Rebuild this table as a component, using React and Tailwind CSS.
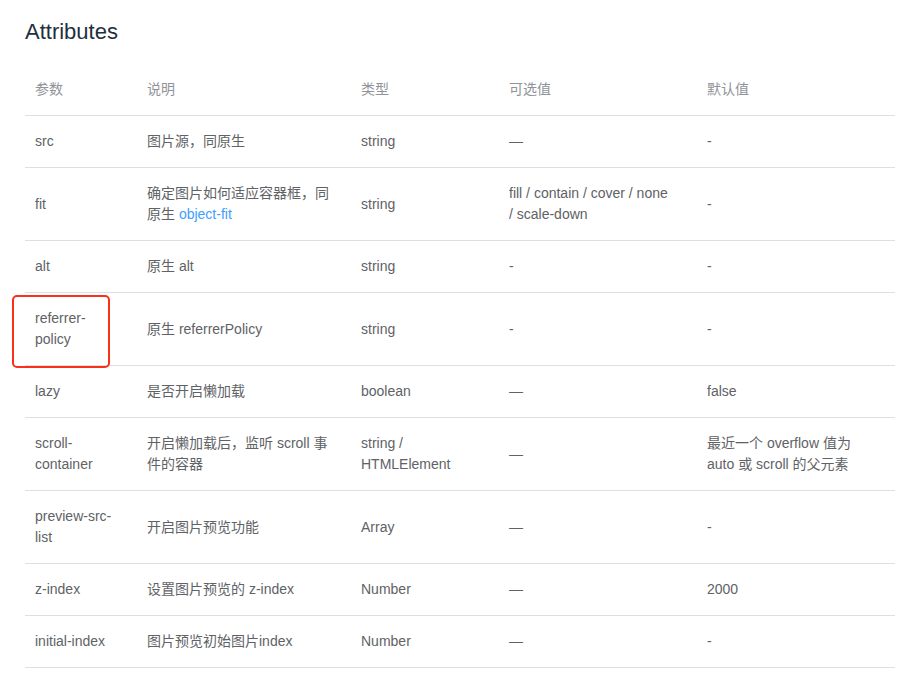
import React from 'react';

const COLS = ['参数', '说明', '类型', '可选值', '默认值'];

const ROWS = [
  { name: 'src', desc: '图片源，同原生', type: 'string', options: '—', def: '-' },
  {
    name: 'fit',
    desc: (
      <>
        确定图片如何适应容器框，同<br />原生 <a className="text-[#409eff]">object-fit</a>
      </>
    ),
    type: 'string',
    options: (
      <>
        fill / contain / cover / none<br />/ scale-down
      </>
    ),
    def: '-',
  },
  { name: 'alt', desc: '原生 alt', type: 'string', options: '-', def: '-' },
  {
    name: (
      <>
        referrer-<br />policy
      </>
    ),
    desc: '原生 referrerPolicy',
    type: 'string',
    options: '-',
    def: '-',
    marked: true,
  },
  { name: 'lazy', desc: '是否开启懒加载', type: 'boolean', options: '—', def: 'false' },
  {
    name: (
      <>
        scroll-<br />container
      </>
    ),
    desc: (
      <>
        开启懒加载后，监听 scroll 事<br />件的容器
      </>
    ),
    type: (
      <>
        string /<br />HTMLElement
      </>
    ),
    options: '—',
    def: (
      <>
        最近一个 overflow 值为<br />auto 或 scroll 的父元素
      </>
    ),
  },
  {
    name: (
      <>
        preview-src-<br />list
      </>
    ),
    desc: '开启图片预览功能',
    type: 'Array',
    options: '—',
    def: '-',
  },
  { name: 'z-index', desc: '设置图片预览的 z-index', type: 'Number', options: '—', def: '2000' },
  { name: 'initial-index', desc: '图片预览初始图片index', type: 'Number', options: '—', def: '-' },
];

const App = () => {
  return (
    <div
      className="min-h-screen bg-white pl-[25px] pt-[15px]"
      style={{ fontFamily: '"Liberation Sans", "Noto Sans CJK SC", sans-serif' }}
    >
      {/* ── Title ─────────────────────────────── */}
      <h3 className="text-[22px] leading-[33px] font-normal text-[#1f2f3d] mb-[16px]">Attributes</h3>

      {/* ── Table ─────────────────────────────── */}
      <table className="w-[870px] table-fixed border-collapse text-[14px] leading-[21px]">
        <colgroup>
          <col className="w-[112px]" />
          <col className="w-[214px]" />
          <col className="w-[148px]" />
          <col className="w-[198px]" />
          <col className="w-[198px]" />
        </colgroup>
        <thead>
          <tr className="border-b border-[#dcdfe6]">
            {COLS.map((c) => (
              <th key={c} className="px-[10px] py-[15px] text-left font-normal text-[#909399]">
                {c}
              </th>
            ))}
          </tr>
        </thead>
        <tbody>
          {ROWS.map((r, i) => (
            <tr key={i} className="border-b border-[#dcdfe6] text-[#606266]">
              <td className="relative px-[10px] py-[15px] align-middle">
                {r.marked && (
                  <span className="absolute left-[-13px] top-[2px] w-[98px] h-[73px] border-2 border-[#f8311b] rounded-[5px] pointer-events-none" />
                )}
                {r.name}
              </td>
              <td className="px-[10px] py-[15px] align-middle">{r.desc}</td>
              <td className="px-[10px] py-[15px] align-middle">{r.type}</td>
              <td className="px-[10px] py-[15px] align-middle">{r.options}</td>
              <td className="px-[10px] py-[15px] align-middle">{r.def}</td>
            </tr>
          ))}
        </tbody>
      </table>
    </div>
  );
};

export default App;
